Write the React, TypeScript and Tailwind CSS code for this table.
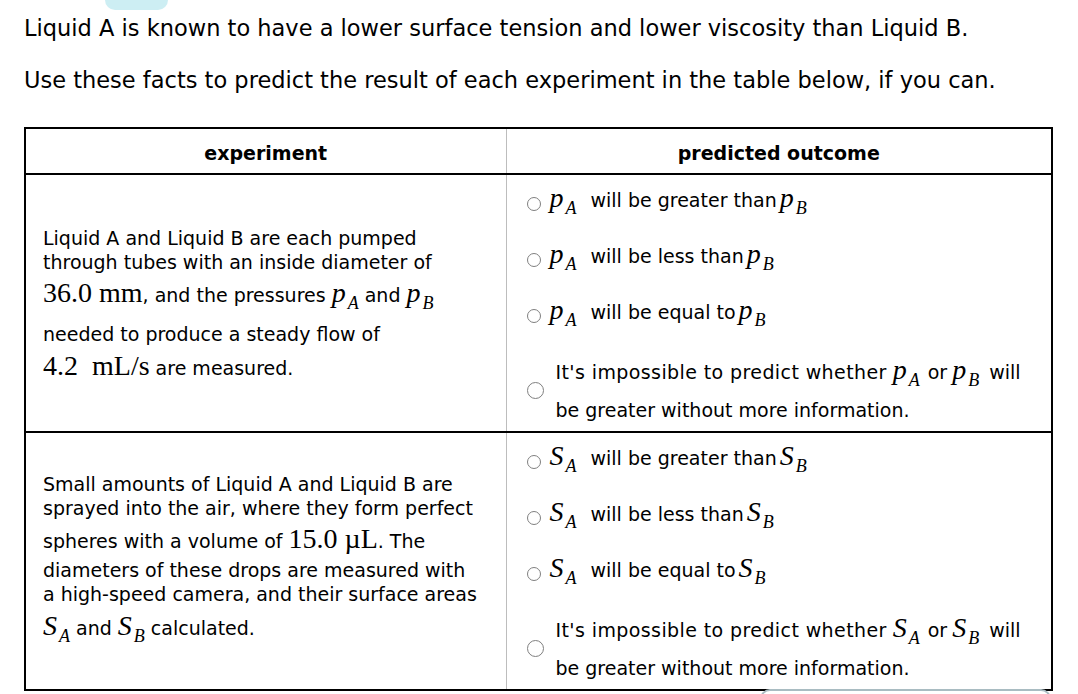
import React from 'react';

const sans = "font-['DejaVu_Sans',Verdana,sans-serif]";
const num = "font-['Liberation_Serif',serif] text-[28px]";

// italic serif variable with a subscript, e.g. p_A
function V({ s, sub, className = '' }: { s: string; sub: string; className?: string }) {
  return (
    <span className={`font-['Liberation_Serif',serif] italic whitespace-nowrap leading-none ${className}`}>
      <span className="text-[28px]">{s}</span>
      <span className="text-[18px] align-[-7px] ml-[2px]">{sub}</span>
    </span>
  );
}

function Radio({ big }: { big?: boolean }) {
  return (
    <span
      className={
        big
          ? 'inline-block w-[17px] h-[17px] shrink-0 rounded-full border border-[#7f7f7f] bg-white'
          : 'relative top-[4px] inline-block w-[14px] h-[14px] shrink-0 rounded-full border border-[#7f7f7f] bg-white'
      }
    />
  );
}

function Option({ s, rel }: { s: string; rel: string }) {
  return (
    <div className="flex items-center h-[32px] gap-[9px]">
      <Radio />
      <span className="flex items-baseline text-[19px] leading-none">
        <V s={s} sub="A" />
        <span className="ml-[14px]">will be {rel}</span>
        <V s={s} sub="B" className="ml-[3px]" />
      </span>
    </div>
  );
}

function Unknown({ s }: { s: string }) {
  return (
    <div className="flex items-center gap-[12px] mt-[24px]">
      <Radio big />
      <div className="text-[19px] leading-none">
        <div className="h-[40px] flex items-center">
          <span className="flex items-baseline">
            <span className="tracking-[0.4px]">It's impossible to predict whether</span>
            <V s={s} sub="A" className="ml-[6px]" />
            <span className="ml-[8px]">or</span>
            <V s={s} sub="B" className="ml-[5px]" />
            <span className="ml-[10px]">will</span>
          </span>
        </div>
        <div className="h-[36px] flex items-center">be greater without more information.</div>
      </div>
    </div>
  );
}

function Outcomes({ s }: { s: string }) {
  return (
    <div className="flex flex-col pl-[20px] pt-[9px] pb-[3px]">
      <Option s={s} rel="greater than" />
      <div className="mt-[24px]"><Option s={s} rel="less than" /></div>
      <div className="mt-[24px]"><Option s={s} rel="equal to" /></div>
      <Unknown s={s} />
    </div>
  );
}

function Line({ h, children }: { h: string; children: React.ReactNode }) {
  return (
    <div className={`${h} flex items-center whitespace-nowrap`}>
      <span>{children}</span>
    </div>
  );
}

export default function App() {
  return (
    <div className={`relative bg-white text-black min-h-[694px] overflow-hidden ${sans}`}>
      <div className="absolute left-[105px] top-0 w-[63px] h-[10px] rounded-b-[10px] bg-[#cdeef3]" />

      <div className="pl-[24px] pt-[14px] text-[22.5px] leading-[28px]">
        <p>Liquid A is known to have a lower surface tension and lower viscosity than Liquid B.</p>
        <p className="mt-[24px]">Use these facts to predict the result of each experiment in the table below, if you can.</p>
      </div>

      <table className="ml-[24px] mt-[33px] w-[1027px] table-fixed border-collapse border-2 border-black">
        <colgroup>
          <col className="w-[481px]" />
          <col className="w-[546px]" />
        </colgroup>
        <thead>
          <tr className="border-b-2 border-black">
            <th className="h-[46px] pt-[4px] border-r border-[#bdbdbd] text-[19px] font-bold">experiment</th>
            <th className="h-[46px] pt-[4px] text-[19px] font-bold">predicted outcome</th>
          </tr>
        </thead>
        <tbody>
          <tr className="border-b-2 border-black">
            <td className="align-middle border-r border-[#bdbdbd] px-[17px] text-[19px] leading-none">
              <Line h="h-[24px]">Liquid A and Liquid B are each pumped</Line>
              <Line h="h-[24px]">through tubes with an inside diameter of</Line>
              <Line h="h-[42px]">
                <span className={num}>36.0 mm</span>, and the pressures <V s="p" sub="A" /> and <V s="p" sub="B" />
              </Line>
              <Line h="h-[36px]">needed to produce a steady flow of</Line>
              <Line h="h-[28px]">
                <span className={num}>4.2&nbsp; mL/s</span> are measured.
              </Line>
            </td>
            <td className="align-top">
              <Outcomes s="p" />
            </td>
          </tr>
          <tr>
            <td className="align-middle border-r border-[#bdbdbd] px-[17px] text-[19px] leading-none">
              <Line h="h-[24px]">Small amounts of Liquid A and Liquid B are</Line>
              <Line h="h-[24px]">sprayed into the air, where they form perfect</Line>
              <Line h="h-[38px]">
                spheres with a volume of <span className={num}>15.0 µL</span>. The
              </Line>
              <Line h="h-[24px]">diameters of these drops are measured with</Line>
              <Line h="h-[24px]">a high-speed camera, and their surface areas</Line>
              <Line h="h-[44px]">
                <V s="S" sub="A" /> and <V s="S" sub="B" /> calculated.
              </Line>
            </td>
            <td className="align-top">
              <Outcomes s="S" />
            </td>
          </tr>
        </tbody>
      </table>

      <div className="absolute left-[760px] top-[689px] w-[291px] h-[20px] rounded-[10px] border-2 border-[#a9bcc2] bg-white" />
    </div>
  );
}
